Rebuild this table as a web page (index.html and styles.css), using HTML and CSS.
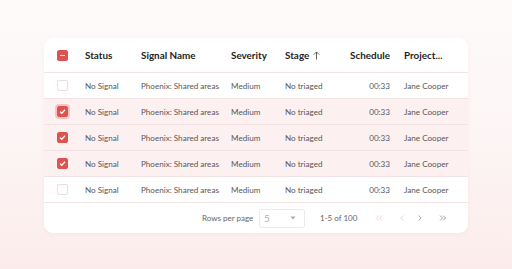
FILE: index.html
```html
<!DOCTYPE html>
<html>
<head>
<meta charset="utf-8">
<link rel="stylesheet" href="styles.css">
</head>
<body>
<div class="page">
  <div class="card">
    <div class="row head">
      <div class="cell"><span class="cb on minus"><span class="dash"></span></span></div>
      <div class="cell">Status</div>
      <div class="cell">Signal Name</div>
      <div class="cell">Severity</div>
      <div class="cell">Stage <svg class="arrow" width="7" height="9" viewBox="0 0 7 9"><path d="M3.5 8.5V1M0.8 3.6L3.5 0.9L6.2 3.6" fill="none" stroke="#555" stroke-width="0.9"/></svg></div>
      <div class="cell right">Schedule</div>
      <div class="cell proj">Project...</div>
    </div>
    <div class="row">
      <div class="cell"><span class="cb"></span></div>
      <div class="cell">No Signal</div>
      <div class="cell">Phoenix: Shared areas</div>
      <div class="cell">Medium</div>
      <div class="cell">No triaged</div>
      <div class="cell right">00:33</div>
      <div class="cell proj">Jane Cooper</div>
    </div>
    <div class="row sel">
      <div class="cell"><span class="cb on focus"><svg width="9" height="9" viewBox="0 0 9 9"><path d="M2 4.6L3.8 6.3L7 2.8" fill="none" stroke="#fff" stroke-width="1.3"/></svg></span></div>
      <div class="cell">No Signal</div>
      <div class="cell">Phoenix: Shared areas</div>
      <div class="cell">Medium</div>
      <div class="cell">No triaged</div>
      <div class="cell right">00:33</div>
      <div class="cell proj">Jane Cooper</div>
    </div>
    <div class="row sel">
      <div class="cell"><span class="cb on"><svg width="9" height="9" viewBox="0 0 9 9"><path d="M2 4.6L3.8 6.3L7 2.8" fill="none" stroke="#fff" stroke-width="1.3"/></svg></span></div>
      <div class="cell">No Signal</div>
      <div class="cell">Phoenix: Shared areas</div>
      <div class="cell">Medium</div>
      <div class="cell">No triaged</div>
      <div class="cell right">00:33</div>
      <div class="cell proj">Jane Cooper</div>
    </div>
    <div class="row sel">
      <div class="cell"><span class="cb on"><svg width="9" height="9" viewBox="0 0 9 9"><path d="M2 4.6L3.8 6.3L7 2.8" fill="none" stroke="#fff" stroke-width="1.3"/></svg></span></div>
      <div class="cell">No Signal</div>
      <div class="cell">Phoenix: Shared areas</div>
      <div class="cell">Medium</div>
      <div class="cell">No triaged</div>
      <div class="cell right">00:33</div>
      <div class="cell proj">Jane Cooper</div>
    </div>
    <div class="row">
      <div class="cell"><span class="cb"></span></div>
      <div class="cell">No Signal</div>
      <div class="cell">Phoenix: Shared areas</div>
      <div class="cell">Medium</div>
      <div class="cell">No triaged</div>
      <div class="cell right">00:33</div>
      <div class="cell proj">Jane Cooper</div>
    </div>
    <div class="foot">
      <span class="rpp">Rows per page</span>
      <span class="select"><span>5</span><svg width="6" height="4" viewBox="0 0 6 4"><path d="M0.5 0.5H5.5L3 3.5Z" fill="#aaa"/></svg></span>
      <span class="range">1-5 of 100</span>
      <span class="pager">
        <svg class="dis" width="8" height="8" viewBox="0 0 8 8"><path d="M4 1.5L1.5 4L4 6.5M7 1.5L4.5 4L7 6.5" fill="none" stroke="currentColor" stroke-width="0.8"/></svg>
        <svg class="dis" width="8" height="8" viewBox="0 0 8 8"><path d="M5.3 1.5L2.8 4L5.3 6.5" fill="none" stroke="currentColor" stroke-width="0.8"/></svg>
        <svg class="en" width="8" height="8" viewBox="0 0 8 8"><path d="M2.7 1.5L5.2 4L2.7 6.5" fill="none" stroke="currentColor" stroke-width="0.8"/></svg>
        <svg class="en" width="8" height="8" viewBox="0 0 8 8"><path d="M1 1.5L3.5 4L1 6.5M4 1.5L6.5 4L4 6.5" fill="none" stroke="currentColor" stroke-width="0.8"/></svg>
      </span>
    </div>
  </div>
</div>
</body>
</html>
```
FILE: styles.css
```css
* { box-sizing: border-box; }
html, body { margin: 0; padding: 0; }
body {
  width: 512px;
  height: 269px;
  overflow: hidden;
  font-family: "Lato", "Liberation Sans", sans-serif;
  background: linear-gradient(180deg, #fdfafa 0%, #fdf6f6 45%, #fbeceb 100%);
}
.page {
  height: 269px;
  padding-top: 38px;
  display: flex;
  justify-content: center;
  align-items: flex-start;
}
.card {
  width: 424px;
  background: #fff;
  border-radius: 9px;
  box-shadow: 0 1px 4px rgba(220, 170, 170, 0.12);
  overflow: hidden;
}
.row {
  display: grid;
  grid-template-columns: 28px 56px 90px 54px 59px 46px 1fr;
  padding-left: 13px;
  height: 26px;
  align-items: center;
  border-bottom: 1px solid #f4e3e4;
  font-size: 8.1px;
  color: #585858;
}
.row.head {
  height: 35px;
  font-size: 9.9px;
  font-weight: 700;
  color: #1e1e1e;
  border-bottom-color: #efe6e7;
}
.row.sel { background: #fcf0f1; }
.cell { white-space: nowrap; display: flex; align-items: center; }
.cell.right { justify-content: flex-end; }
.cell.proj { padding-left: 14px; }
.arrow { margin-left: 4px; }
.cb {
  width: 11px;
  height: 11px;
  border-radius: 2px;
  border: 1px solid #ecdcdd;
  background: #fff;
  display: flex;
  align-items: center;
  justify-content: center;
}
.cb.on { background: #dc5450; border-color: #dc5450; }
.cb.focus { box-shadow: 0 0 0 2px #f2c6c6; }
.dash { width: 5px; height: 1px; background: #fbdede; }
.foot {
  height: 30px;
  display: flex;
  align-items: center;
  font-size: 8px;
  color: #666;
  padding-left: 158px;
}
.rpp { width: 57px; }
.select {
  width: 46px;
  height: 19px;
  border: 1px solid #eeeaea;
  border-radius: 2px;
  display: flex;
  align-items: center;
  justify-content: space-between;
  padding: 0 8px 0 4px;
  font-size: 10px;
  color: #b0b0b0;
}
.range { margin-left: 15px; width: 55px; }
.pager { display: flex; align-items: center; gap: 10px; }
.pager .dis { color: #ecc4c8; }
.pager .en { color: #888; }
.pager svg:nth-child(1) { margin-right: 5px; }
.pager svg:nth-child(3) { margin-right: 5px; }
```
